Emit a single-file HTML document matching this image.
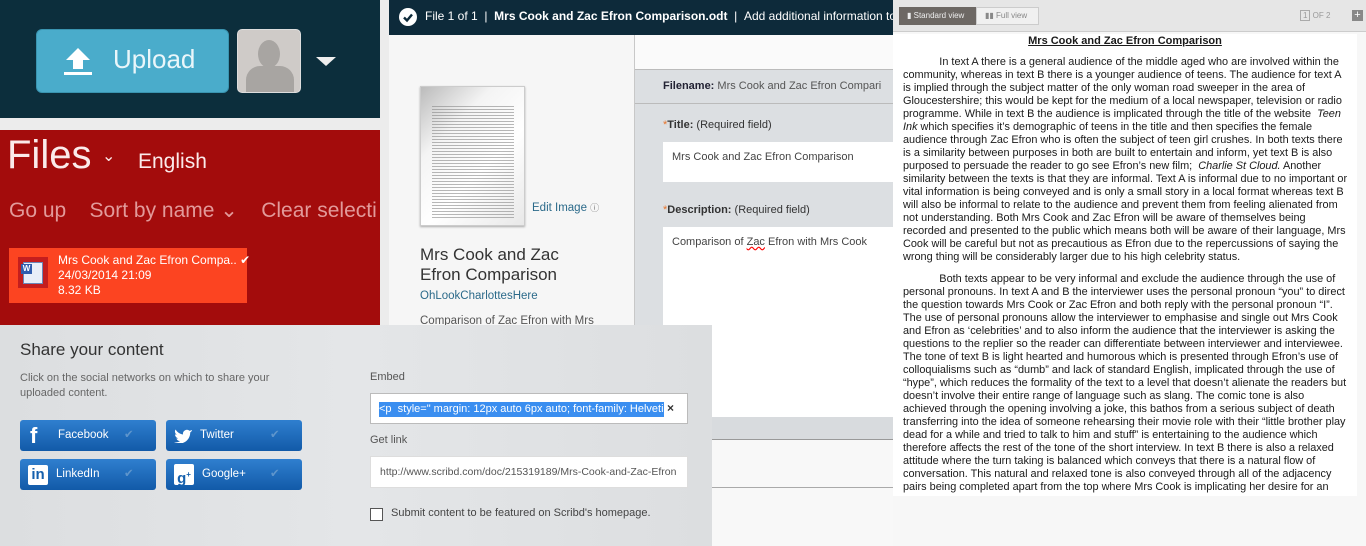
<!DOCTYPE html>
<html><head><meta charset="utf-8"><style>
*{margin:0;padding:0;box-sizing:border-box}
body{width:1366px;height:546px;overflow:hidden;position:relative;font-family:"Liberation Sans",sans-serif;background:#f6f6f6}
.a{position:absolute}
.doc div{white-space:nowrap}
</style></head><body>
<!-- middle panel -->
<div class="a" style="left:389px;top:0;width:504px;height:546px;background:#f6f6f6"></div>
<div class="a" style="left:389px;top:0;width:504px;height:35px;background:#0d2a3a"></div>
<div class="a" style="left:399px;top:8px;width:18px;height:18px;border-radius:50%;background:#fff"></div>
<svg class="a" style="left:399px;top:8px" width="18" height="18"><path d="M5 9.5l3 3 5-6" stroke="#0d2a3a" stroke-width="2.4" fill="none"/></svg>
<div class="a" style="left:425px;top:9px;color:#fff;font-size:12px;white-space:nowrap">File 1 of 1 &nbsp;| &nbsp;<b>Mrs Cook and Zac Efron Comparison.odt</b> &nbsp;| &nbsp;Add additional information to imp</div>
<div class="a" style="left:634px;top:35px;width:259px;height:511px;background:#fafafa;border-left:1px solid #c8c8c8"></div>
<div class="a" style="left:635px;top:69px;width:258px;height:400px;background:#dcdfe2;border-top:1px solid #bbb"></div>
<div class="a" style="left:635px;top:103px;width:258px;height:1px;background:#bbb"></div>
<div class="a" style="left:663px;top:80px;font-size:11px;color:#555;white-space:nowrap"><b style="color:#223">Filename:</b> Mrs Cook and Zac Efron Compari</div>
<div class="a" style="left:663px;top:119px;font-size:11px;color:#333;white-space:nowrap"><span style="color:#e8742a">*</span><b>Title:</b> (Required field)</div>
<div class="a" style="left:663px;top:142px;width:230px;height:40px;background:#fff;font-size:11px;color:#444;padding:9px 9px">Mrs Cook and Zac Efron Comparison</div>
<div class="a" style="left:663px;top:204px;font-size:11px;color:#333;white-space:nowrap"><span style="color:#e8742a">*</span><b>Description:</b> (Required field)</div>
<div class="a" style="left:663px;top:227px;width:230px;height:190px;background:#fff;font-size:11px;color:#444;padding:9px 9px;white-space:nowrap">Comparison of <u style="text-decoration-color:red;text-decoration-style:wavy">Zac</u> Efron with Mrs Cook</div>
<div class="a" style="left:635px;top:417px;width:258px;height:23px;background:#d8dbde;border-bottom:1px solid #999"></div>
<div class="a" style="left:635px;top:440px;width:258px;height:48px;background:#f8f8f8;border-bottom:1px solid #aaa"></div>
<div class="a" style="left:635px;top:488px;width:258px;height:58px;background:#f8f8f8"></div>
<div class="a" style="left:420px;top:86px;width:105px;height:140px;background:linear-gradient(135deg,#bbb,#f4f4f4 30%,#fff 60%,#e8e8e8);border:1px solid #ccc;box-shadow:0 1px 2px #aaa"></div>
<div class="a" style="left:432px;top:106px;width:82px;height:112px;background:repeating-linear-gradient(#888 0 1px,transparent 1px 3px);opacity:.6"></div>
<div class="a" style="left:532px;top:201px;font-size:11.5px;color:#2b6a8a;white-space:nowrap">Edit Image <span style="font-size:9px;color:#777">ⓘ</span></div>
<div class="a" style="left:420px;top:245px;font-size:17px;line-height:20px;color:#333">Mrs Cook and Zac<br>Efron Comparison</div>
<div class="a" style="left:420px;top:290px;font-size:11.5px;color:#2b6a8a">OhLookCharlottesHere</div>
<div class="a" style="left:420px;top:315px;font-size:11.5px;color:#555;white-space:nowrap">Comparison of Zac Efron with Mrs</div>

<!-- left panel -->
<div class="a" style="left:0;top:0;width:389px;height:330px;background:#ececec"></div>
<div class="a" style="left:0;top:0;width:380px;height:118px;background:#0c2e3c"></div>
<div class="a" style="left:0;top:130px;width:380px;height:195px;background:#a30c0c"></div>
<div class="a" style="left:36px;top:29px;width:193px;height:64px;border-radius:6px;background:#4aaccb;border:1px solid #3a94b0"></div>
<svg class="a" style="left:62px;top:46px" width="32" height="32"><path d="M16 2L4 14h7v9h10v-9h7z" fill="#fff"/><rect x="2" y="26" width="28" height="3" fill="#fff"/></svg>
<div class="a" style="left:113px;top:44px;font-size:26px;color:#eaf6fa">Upload</div>
<div class="a" style="left:237px;top:29px;width:64px;height:64px;border-radius:5px;background:#cfcbc8;border:1px solid #ddd;overflow:hidden"><div style="position:absolute;left:20px;top:10px;width:22px;height:28px;border-radius:50%;background:#a8a5a2"></div><div style="position:absolute;left:8px;top:36px;width:48px;height:30px;border-radius:14px 14px 0 0;background:#a8a5a2"></div></div>
<svg class="a" style="left:316px;top:57px" width="20" height="10"><path d="M0 0h20L10 9z" fill="#eee"/></svg>
<div class="a" style="left:7px;top:133px;font-size:40px;color:#fbeaea;font-weight:300">Files</div>
<div class="a" style="left:102px;top:146px;font-size:16px;color:#fbeaea">⌄</div>
<div class="a" style="left:138px;top:150px;font-size:21px;color:#fbeaea">English</div>
<div class="a" style="left:9px;top:198px;font-size:21px;color:#e29a9a;white-space:nowrap">Go up &nbsp;&nbsp; Sort by name ⌄ &nbsp;&nbsp; Clear selecti</div>
<div class="a" style="left:9px;top:248px;width:238px;height:55px;background:#fc4421"></div>
<div class="a" style="left:18px;top:257px;width:30px;height:31px;background:#c41e1e"></div>
<div class="a" style="left:23px;top:262px;width:20px;height:22px;background:#e8eef8;border:1px solid #6a86b8"></div>
<div class="a" style="left:21px;top:264px;width:11px;height:10px;background:#2f5dae;color:#fff;font-size:8px;font-weight:bold;text-align:center;line-height:10px">W</div>
<div class="a" style="left:58px;top:253px;font-size:12px;line-height:15px;color:#fff;white-space:nowrap">Mrs Cook and Zac Efron Compa.. ✔<br>24/03/2014 21:09<br>8.32 KB</div>

<!-- right doc panel -->
<div class="a" style="left:893px;top:0;width:473px;height:546px;background:#f7f7f7"></div>
<div class="a" style="left:893px;top:0;width:473px;height:32px;background:#e6e6e6;border-bottom:1px solid #ccc"></div>
<div class="a" style="left:899px;top:7px;width:77px;height:18px;background:#6d6864;color:#eee;font-size:8px;line-height:18px;padding-left:8px">▮ Standard view</div>
<div class="a" style="left:976px;top:7px;width:63px;height:18px;background:#f0f0f0;border:1px solid #ccc;color:#888;font-size:8px;line-height:16px;padding-left:8px">▮▮ Full view</div>
<div class="a" style="left:1300px;top:11px;font-size:8px;color:#999"><span style="border:1px solid #aaa;padding:0 2px">1</span> OF 2</div>
<div class="a" style="left:1352px;top:10px;width:11px;height:11px;background:#888;color:#fff;font-size:11px;line-height:10px;text-align:center">+</div>
<div class="a" style="left:893px;top:34px;width:464px;height:462px;background:#fff"></div>
<div class="a doc" style="left:903px;top:34px;font-size:10.9px;line-height:13px;color:#1a1a1a">
<div style="text-align:center;width:444px;font-weight:bold;text-decoration:underline;font-size:11px;line-height:14px">Mrs Cook and Zac Efron Comparison</div>
<div style="height:8px"></div>
<div>&nbsp;&nbsp;&nbsp;&nbsp;&nbsp;&nbsp;&nbsp;&nbsp;&nbsp;&nbsp;&nbsp;&nbsp;In text A there is a general audience of the middle aged who are involved within the</div>
<div>community, whereas in text B there is a younger audience of teens. The audience for text A</div>
<div>is implied through the subject matter of the only woman road sweeper in the area of</div>
<div>Gloucestershire; this would be kept for the medium of a local newspaper, television or radio</div>
<div>programme. While in text B the audience is implicated through the title of the website &nbsp;<i>Teen</i></div>
<div><i>Ink</i> which specifies it’s demographic of teens in the title and then specifies the female</div>
<div>audience through Zac Efron who is often the subject of teen girl crushes. In both texts there</div>
<div>is a similarity between purposes in both are built to entertain and inform, yet text B is also</div>
<div>purposed to persuade the reader to go see Efron’s new film; &nbsp;<i>Charlie St Cloud.</i> Another</div>
<div>similarity between the texts is that they are informal. Text A is informal due to no important or</div>
<div>vital information is being conveyed and is only a small story in a local format whereas text B</div>
<div>will also be informal to relate to the audience and prevent them from feeling alienated from</div>
<div>not understanding. Both Mrs Cook and Zac Efron will be aware of themselves being</div>
<div>recorded and presented to the public which means both will be aware of their language, Mrs</div>
<div>Cook will be careful but not as precautious as Efron due to the repercussions of saying the</div>
<div>wrong thing will be considerably larger due to his high celebrity status.</div>
<div style="height:9px"></div>
<div>&nbsp;&nbsp;&nbsp;&nbsp;&nbsp;&nbsp;&nbsp;&nbsp;&nbsp;&nbsp;&nbsp;&nbsp;Both texts appear to be very informal and exclude the audience through the use of</div>
<div>personal pronouns. In text A and B the interviewer uses the personal pronoun “you” to direct</div>
<div>the question towards Mrs Cook or Zac Efron and both reply with the personal pronoun “I”.</div>
<div>The use of personal pronouns allow the interviewer to emphasise and single out Mrs Cook</div>
<div>and Efron as ‘celebrities’ and to also inform the audience that the interviewer is asking the</div>
<div>questions to the replier so the reader can differentiate between interviewer and interviewee.</div>
<div>The tone of text B is light hearted and humorous which is presented through Efron’s use of</div>
<div>colloquialisms such as “dumb” and lack of standard English, implicated through the use of</div>
<div>“hype”, which reduces the formality of the text to a level that doesn’t alienate the readers but</div>
<div>doesn’t involve their entire range of language such as slang. The comic tone is also</div>
<div>achieved through the opening involving a joke, this bathos from a serious subject of death</div>
<div>transferring into the idea of someone rehearsing their movie role with their “little brother play</div>
<div>dead for a while and tried to talk to him and stuff” is entertaining to the audience which</div>
<div>therefore affects the rest of the tone of the short interview. In text B there is also a relaxed</div>
<div>attitude where the turn taking is balanced which conveys that there is a natural flow of</div>
<div>conversation. This natural and relaxed tone is also conveyed through all of the adjacency</div>
<div>pairs being completed apart from the top where Mrs Cook is implicating her desire for an</div>
</div>

<!-- share panel -->
<div class="a" style="left:0;top:325px;width:712px;height:221px;background:linear-gradient(90deg,#dcdee0,#e4e6e8 50%,#dcdee0)"></div>
<div class="a" style="left:20px;top:340px;font-size:17px;color:#333">Share your content</div>
<div class="a" style="left:20px;top:371px;font-size:11px;line-height:15px;color:#666">Click on the social networks on which to share your<br>uploaded content.</div>
<div class="a" style="left:20px;top:420px;width:136px;height:31px;border-radius:3px;background:linear-gradient(#2f7fcf,#125aa8);color:#fff;font-size:11.5px;line-height:31px;padding-left:38px">Facebook<span style="position:absolute;left:104px;color:#5e95cc">✔</span><b style="position:absolute;left:10px;top:0;font-size:22px">f</b></div>
<div class="a" style="left:166px;top:420px;width:136px;height:31px;border-radius:3px;background:linear-gradient(#2f7fcf,#125aa8);color:#fff;font-size:11.5px;line-height:31px;padding-left:34px">Twitter<span style="position:absolute;left:104px;color:#5e95cc">✔</span><svg style="position:absolute;left:8px;top:8px" width="18" height="15"><path d="M18 2c-1 .5-2 .7-2.5.8A4 4 0 0 0 9 6.5 11 11 0 0 1 1.5 1.5a4 4 0 0 0 1.2 5.3c-.6 0-1.2-.2-1.700-.5 0 2 1.4 3.6 3.2 4a4 4 0 0 1-1.8.1 4 4 0 0 0 3.7 2.7A8 8 0 0 1 0 14.3 11 11 0 0 0 16.2 4.5c.7-.5 1.3-1.2 1.8-1.9z" fill="#fff"/></svg></div>
<div class="a" style="left:20px;top:459px;width:136px;height:31px;border-radius:3px;background:linear-gradient(#2f7fcf,#125aa8);color:#fff;font-size:11.5px;line-height:31px;padding-left:36px">LinkedIn<span style="position:absolute;left:104px;color:#5e95cc">✔</span><span style="position:absolute;left:8px;top:6px;width:20px;height:20px;background:#fff;color:#1560ad;font-weight:bold;font-size:15px;line-height:20px;text-align:center;border-radius:2px">in</span></div>
<div class="a" style="left:166px;top:459px;width:136px;height:31px;border-radius:3px;background:linear-gradient(#2f7fcf,#125aa8);color:#fff;font-size:11.5px;line-height:31px;padding-left:36px">Google+<span style="position:absolute;left:104px;color:#5e95cc">✔</span><span style="position:absolute;left:8px;top:5px;width:20px;height:21px;background:#fff;color:#1560ad;font-weight:bold;font-size:15px;line-height:21px;text-align:center;border-radius:2px">g<sup style="font-size:8px">+</sup></span></div>
<div class="a" style="left:370px;top:371px;font-size:11px;color:#555">Embed</div>
<div class="a" style="left:370px;top:393px;width:318px;height:31px;background:#fff;border:1px solid #bbb"><span style="position:absolute;left:8px;top:8px;width:285px;height:15px;background:#3a8ef0;color:#fff;font-size:11px;line-height:15px;white-space:nowrap;overflow:hidden">&lt;p &nbsp;style=" margin: 12px auto 6px auto; font-family: Helvetica</span><span style="position:absolute;left:296px;top:7px;font-size:12px;color:#333;font-weight:bold">×</span></div>
<div class="a" style="left:370px;top:434px;font-size:11px;color:#555">Get link</div>
<div class="a" style="left:370px;top:456px;width:318px;height:32px;background:#fff;border:1px solid #ddd;font-size:10.5px;color:#555;line-height:30px;padding-left:9px;white-space:nowrap;overflow:hidden">http://www.scribd.com/doc/215319189/Mrs-Cook-and-Zac-Efron</div>
<div class="a" style="left:370px;top:508px;width:13px;height:13px;background:#fff;border:1px solid #555"></div>
<div class="a" style="left:391px;top:507px;font-size:11px;color:#444">Submit content to be featured on Scribd's homepage.</div>
</body></html>
